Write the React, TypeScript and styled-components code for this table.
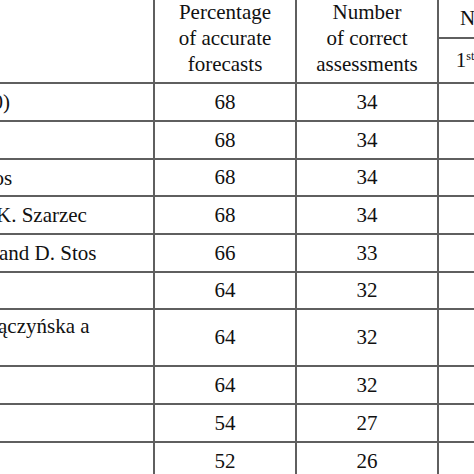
import styled, { createGlobalStyle } from "styled-components"

const GlobalStyle = createGlobalStyle`
  html, body {
    margin: 0;
    padding: 0;
    background: #ffffff;
    overflow: hidden;
  }
  body {
    font-family: "Liberation Serif", "Times New Roman", serif;
    color: #111111;
  }
`

// grid lines come from the container background showing through the 2px gaps
const Table = styled.div`
  display: grid;
  width: 620px;
  grid-template-columns: 153px 140px 140px 48px 1fr;
  grid-template-rows: 37px 43px 36px 36px 35px 36px 36px 35px 55px 36px 36px 36px;
  gap: 2px;
  background: #5f5f5f;
  font-size: 21px;
`

const Cell = styled.div`
  background: #ffffff;
  display: flex;
  align-items: center;
  min-width: 0;
`

const HeadCell = styled(Cell)`
  grid-row: 1 / span 2;
  flex-direction: column;
  justify-content: flex-end;
  align-items: center;
  text-align: center;
  line-height: 26px;
  padding-bottom: 5px;
  box-sizing: border-box;
`

const GroupHead = styled(Cell)`
  grid-column: 4 / span 2;
  padding-left: 21px;
  white-space: nowrap;
  overflow: hidden;
`

const SubHead = styled(Cell)`
  justify-content: center;
  padding-left: 4px;
  sup {
    font-size: 12px;
    vertical-align: 7px;
    line-height: 0;
  }
`

const LabelCell = styled(Cell)`
  white-space: nowrap;
  line-height: 24px;
`

const Label = styled.span<{ $shift: number }>`
  margin-left: ${p => p.$shift}px;
`

const NumCell = styled(Cell)`
  justify-content: center;
`

const rows = [
  { label: "10)", shift: -18, pct: 68, n: 34 },
  { label: "", shift: 0, pct: 68, n: 34 },
  { label: "Stos", shift: -24, pct: 68, n: 34 },
  { label: " K. Szarzec", shift: -4, pct: 68, n: 34 },
  { label: "and D. Stos", shift: -1, pct: 66, n: 33 },
  { label: "", shift: 0, pct: 64, n: 32 },
  { label: "ączyńska a", shift: -2, pct: 64, n: 32, tall: true },
  { label: "", shift: 0, pct: 64, n: 32 },
  { label: "", shift: 0, pct: 54, n: 27 },
  { label: "", shift: 0, pct: 52, n: 26 },
]

const App = () => {
  return (
    <>
      <GlobalStyle />
      <Table>
        <HeadCell />
        <HeadCell>
          <div>Percentage</div>
          <div>of accurate</div>
          <div>forecasts</div>
        </HeadCell>
        <HeadCell>
          <div>Number</div>
          <div>of correct</div>
          <div>assessments</div>
        </HeadCell>
        <GroupHead>Number of incorrect assessments</GroupHead>
        <SubHead>
          <span>
            1<sup>st</sup>
          </span>
        </SubHead>
        <Cell />

        {rows.map((row, i) => (
          <RowCells key={i} {...row} />
        ))}
      </Table>
    </>
  )
}

const RowCells = ({ label, shift, pct, n, tall }: { label: string; shift: number; pct: number; n: number; tall?: boolean }) => (
  <>
    <LabelCell>
      <Label $shift={shift}>
        {label}
        {tall && (
          <>
            <br />
            {"\u00a0"}
          </>
        )}
      </Label>
    </LabelCell>
    <NumCell>{pct}</NumCell>
    <NumCell>{n}</NumCell>
    <Cell />
    <Cell />
  </>
)

export default App
